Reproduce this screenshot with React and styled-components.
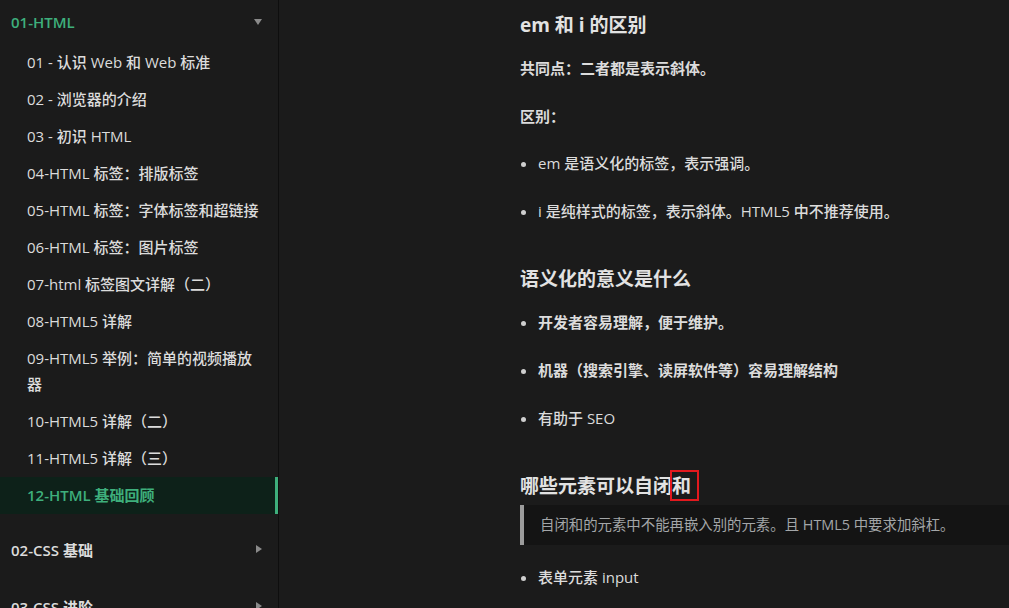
import React from "react";
import styled, { createGlobalStyle } from "styled-components";

const GlobalStyle = createGlobalStyle`
  html, body {
    margin: 0;
    padding: 0;
    background: #1b1b1b;
    overflow: hidden;
  }
  body {
    font-family: "Open Sans", "Noto Sans CJK SC", sans-serif;
    color: #dcdcdc;
    -webkit-font-smoothing: antialiased;
  }
  * { box-sizing: border-box; }
`;

const GREEN = "#3eaf7c";

const Page = styled.div`
  display: flex;
  width: 1009px;
  height: 608px;
  overflow: hidden;
  background: #1b1b1b;
`;

const Sidebar = styled.aside`
  width: 279px;
  flex-shrink: 0;
  border-right: 1px solid #0e0e0e;
  display: flex;
  flex-direction: column;
  overflow: hidden;
`;

const Group = styled.section`
  margin-bottom: 13px;
  flex-shrink: 0;
`;

const GroupHeader = styled.div`
  height: 44px;
  display: flex;
  align-items: center;
  justify-content: space-between;
  padding: 0 16px 0 11px;
  font-size: 15px;
  font-weight: 600;
  color: ${(p) => (p.$open ? GREEN : "#dcdcdc")};
`;

const ItemList = styled.ul`
  list-style: none;
  margin: 0;
  padding: 0;
`;

const Item = styled.li`
  padding: 5px 15px 6px 27px;
  line-height: 26px;
  font-size: 15px;
  font-weight: ${(p) => (p.$active ? 600 : 500)};
  color: ${(p) => (p.$active ? GREEN : "#dcdcdc")};
  background: ${(p) => (p.$active ? "#0d2119" : "transparent")};
  border-right: 3px solid ${(p) => (p.$active ? GREEN : "transparent")};
`;

const Main = styled.main`
  flex: 1;
  min-width: 0;
  padding: 11px 0 0 241px;
  display: flex;
  flex-direction: column;
  overflow: hidden;
`;

const Heading = styled.h3`
  margin: 41px 0 0;
  font-size: 19px;
  line-height: 28px;
  font-weight: 700;
  color: #e2e2e2;
  &:first-child { margin-top: 0; }
`;

const Para = styled.p`
  margin: 22px 0 0;
  font-size: 15px;
  line-height: 26px;
  font-weight: ${(p) => (p.$strong ? 700 : 500)};
  color: #dcdcdc;
  ${Heading} + & { margin-top: 16px; }
`;

const List = styled.ul`
  margin: 21px 0 0;
  padding: 0 0 0 18px;
  display: flex;
  flex-direction: column;
  gap: 22px;
  ${Heading} + & { margin-top: 16px; }
`;

const Quote = styled.blockquote`
  margin: 5px 0 0;
  padding: 7px 0 7px 16px;
  border-left: 4px solid #9c9c9c;
  background: #141414;
  font-size: 14.4px;
  line-height: 26px;
  color: #a3a6a8;
  white-space: nowrap;
  & + ${List} { margin-top: 19px; }
`;

const ListItem = styled.li`
  font-size: 15px;
  line-height: 26px;
  font-weight: ${(p) => (p.$strong ? 700 : 500)};
  color: #dcdcdc;
  &::marker { color: #cfcfcf; }
`;

const Marked = styled.span`
  position: relative;
  &::after {
    content: "";
    position: absolute;
    left: -2px;
    right: -8px;
    top: -3px;
    bottom: -2px;
    border: 2px solid #e3191e;
  }
`;

function Caret({ open }) {
  return open ? (
    <svg width="8" height="6" viewBox="0 0 8 6">
      <path d="M0 0 L8 0 L4 6 Z" fill="#8a8a8a" />
    </svg>
  ) : (
    <svg width="6" height="8" viewBox="0 0 6 8">
      <path d="M0 0 L6 4 L0 8 Z" fill="#8a8a8a" />
    </svg>
  );
}

const htmlItems = [
  "01 - 认识 Web 和 Web 标准",
  "02 - 浏览器的介绍",
  "03 - 初识 HTML",
  "04-HTML 标签：排版标签",
  "05-HTML 标签：字体标签和超链接",
  "06-HTML 标签：图片标签",
  "07-html 标签图文详解（二）",
  "08-HTML5 详解",
  "09-HTML5 举例：简单的视频播放器",
  "10-HTML5 详解（二）",
  "11-HTML5 详解（三）",
  "12-HTML 基础回顾",
];

export default function App() {
  return (
    <>
      <GlobalStyle />
      <Page>
        <Sidebar>
          <Group>
            <GroupHeader $open>
              <span>01-HTML</span>
              <Caret open />
            </GroupHeader>
            <ItemList>
              {htmlItems.map((t, i) => (
                <Item key={t} $active={i === htmlItems.length - 1}>
                  {t}
                </Item>
              ))}
            </ItemList>
          </Group>
          <Group>
            <GroupHeader>
              <span>02-CSS 基础</span>
              <Caret />
            </GroupHeader>
          </Group>
          <Group>
            <GroupHeader>
              <span>03-CSS 进阶</span>
              <Caret />
            </GroupHeader>
          </Group>
        </Sidebar>
        <Main>
          <Heading>em 和 i 的区别</Heading>
          <Para $strong>共同点：二者都是表示斜体。</Para>
          <Para $strong>区别：</Para>
          <List>
            <ListItem>em 是语义化的标签，表示强调。</ListItem>
            <ListItem>i 是纯样式的标签，表示斜体。HTML5 中不推荐使用。</ListItem>
          </List>
          <Heading>语义化的意义是什么</Heading>
          <List>
            <ListItem $strong>开发者容易理解，便于维护。</ListItem>
            <ListItem $strong>机器（搜索引擎、读屏软件等）容易理解结构</ListItem>
            <ListItem>有助于 SEO</ListItem>
          </List>
          <Heading>
            哪些元素可以自闭<Marked>和</Marked>
          </Heading>
          <Quote>自闭和的元素中不能再嵌入别的元素。且 HTML5 中要求加斜杠。</Quote>
          <List>
            <ListItem>表单元素 input</ListItem>
          </List>
        </Main>
      </Page>
    </>
  );
}
